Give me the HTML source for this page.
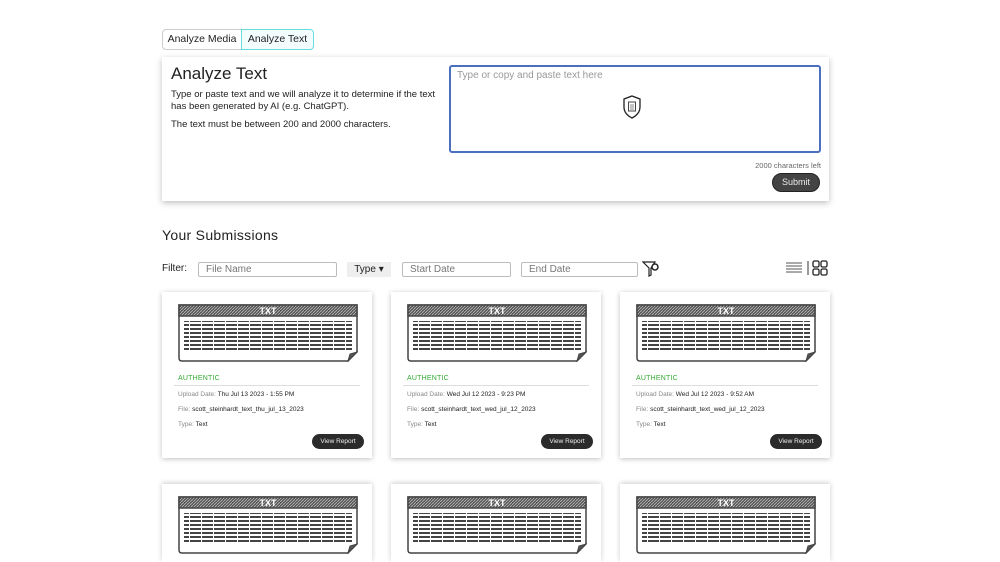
<!DOCTYPE html>
<html><head><meta charset="utf-8"><style>
*{box-sizing:border-box;margin:0;padding:0}
html,body{width:1000px;height:562px;overflow:hidden}
body{background:#fff;font-family:"Liberation Sans",sans-serif;color:#222;position:relative}
.abs{position:absolute}
.tab{position:absolute;top:29px;height:21px;border:1px solid #ccc;font-size:10.5px;line-height:19px;text-align:center;background:#fff}
.panel{position:absolute;left:162px;top:57px;width:667px;height:144px;background:#fff;box-shadow:0 2px 6px rgba(0,0,0,.25)}
.inp{position:absolute;top:262px;height:15px;border:1px solid #bbb;border-radius:2px;font-size:10px;color:#777;line-height:13px;padding-left:7px}
.card{position:absolute;width:210px;height:166px;background:#fff;box-shadow:0 1px 5px rgba(0,0,0,.25)}
.card.s{height:78px;box-shadow:0 -1px 5px rgba(0,0,0,.2)}
.card svg{position:absolute;left:16px;top:12px}
.auth{position:absolute;left:16px;top:83px;font-size:7px;color:#3a3;letter-spacing:.2px}
.hr{position:absolute;left:12px;right:12px;top:93px;border-top:1px solid #ddd}
.ln{position:absolute;left:16px;font-size:6.5px;color:#888}
.ln b{color:#222;font-weight:normal}
.btn{position:absolute;right:8px;top:142px;width:52px;height:15px;border-radius:8px;background:#2b2b2b;color:#eee;font-size:6.5px;text-align:center;line-height:15px}
</style></head><body>
<svg width="0" height="0" style="position:absolute"><defs>
<pattern id="h" width="3" height="3" patternUnits="userSpaceOnUse"><rect width="3" height="3" fill="#555"/><path d="M0 3L3 0" stroke="#bbb" stroke-width=".8"/></pattern>
<pattern id="l" width="24" height="4" patternUnits="userSpaceOnUse"><rect x="0" y="0" width="11" height="2" fill="#444"/><rect x="12" y="0" width="11" height="2" fill="#444"/></pattern>
<symbol id="doc" viewBox="0 0 180 58"><path d="M1 1H179V48L170 57H4Q1 57 1 54Z" fill="#fff" stroke="#444" stroke-width="1.5"/><rect x="1" y="1" width="178" height="11" fill="url(#h)" stroke="#444" stroke-width="1.5"/><text x="90" y="10" font-size="9" font-weight="bold" fill="#fff" text-anchor="middle" font-family="Liberation Sans">TXT</text><rect x="6" y="17" width="168" height="31" fill="url(#l)"/><path d="M179 48L170 57L172 50Z" fill="#555" stroke="#444"/></symbol>
</defs></svg>

<div class="tab" style="left:162px;width:80px;border-radius:4px 0 0 4px">Analyze Media</div>
<div class="tab" style="left:241px;width:73px;border:1px solid #6dd;background:#f3fdfd;border-radius:0 4px 4px 0">Analyze Text</div>

<div class="panel">
<div class="abs" style="left:9px;top:7px;font-size:17px">Analyze Text</div>
<div class="abs" style="left:9px;top:32px;width:270px;font-size:9.5px;line-height:12px">Type or paste text and we will analyze it to determine if the text has been generated by AI (e.g. ChatGPT).</div>
<div class="abs" style="left:9px;top:62px;font-size:9.5px">The text must be between 200 and 2000 characters.</div>
<div class="abs" style="left:287px;top:8px;width:372px;height:88px;border:2px solid #4a6fc0;border-radius:3px;font-size:10px;color:#999;padding:3px 6px">Type or copy and paste text here</div>
<svg class="abs" style="left:460px;top:38px" width="20" height="24" viewBox="0 0 20 24"><path d="M10 1L18 4V12Q18 19 10 23Q2 19 2 12V4Z" fill="none" stroke="#222" stroke-width="1.3"/><rect x="6.5" y="7" width="7" height="9" fill="none" stroke="#444"/><path d="M8 10h4M8 12h4M8 14h4" stroke="#666" stroke-width=".7"/></svg>
<div class="abs" style="right:8px;top:104px;font-size:7.5px;color:#666">2000 characters left</div>
<div class="abs" style="left:610px;top:116px;width:48px;height:19px;border-radius:10px;background:#444;border:1px solid #222;color:#eee;font-size:9px;text-align:center;line-height:17px">Submit</div>
</div>

<div class="abs" style="left:162px;top:227px;font-size:14px;letter-spacing:.3px">Your Submissions</div>
<div class="abs" style="left:162px;top:263px;font-size:10px">Filter:</div>
<div class="inp" style="left:198px;width:139px">File Name</div>
<div class="abs" style="left:347px;top:262px;width:44px;height:15px;background:#eee;font-size:10px;line-height:15px;text-align:center">Type ▾</div>
<div class="inp" style="left:402px;width:109px">Start Date</div>
<div class="inp" style="left:521px;width:117px">End Date</div>
<svg class="abs" style="left:642px;top:261px" width="18" height="16"><path d="M1 1H13L9 7V14L7 15V7Z" fill="none" stroke="#222" stroke-width="1.2"/><circle cx="13" cy="6" r="3" fill="#fff" stroke="#222" stroke-width="1.5"/></svg>
<svg class="abs" style="left:786px;top:260px" width="44" height="16"><path d="M0 3H16M0 6H16M0 9H16M0 12H16" stroke="#555"/><path d="M22 1V15" stroke="#333"/><rect x="27" y="1" width="6" height="6" rx="1.5" fill="none" stroke="#222" stroke-width="1.3"/><rect x="35" y="1" width="6" height="6" rx="1.5" fill="none" stroke="#222" stroke-width="1.3"/><rect x="27" y="9" width="6" height="6" rx="1.5" fill="none" stroke="#222" stroke-width="1.3"/><rect x="35" y="9" width="6" height="6" rx="1.5" fill="none" stroke="#222" stroke-width="1.3"/></svg>

<div class="card" style="left:162px;top:292px"><svg width="180" height="58"><use href="#doc"/></svg><div class="auth">AUTHENTIC</div><div class="hr"></div><div class="ln" style="top:99px">Upload Date: <b>Thu Jul 13 2023 - 1:55 PM</b></div><div class="ln" style="top:114px">File: <b>scott_steinhardt_text_thu_jul_13_2023</b></div><div class="ln" style="top:129px">Type: <b>Text</b></div><div class="btn">View Report</div></div>
<div class="card" style="left:391px;top:292px"><svg width="180" height="58"><use href="#doc"/></svg><div class="auth">AUTHENTIC</div><div class="hr"></div><div class="ln" style="top:99px">Upload Date: <b>Wed Jul 12 2023 - 9:23 PM</b></div><div class="ln" style="top:114px">File: <b>scott_steinhardt_text_wed_jul_12_2023</b></div><div class="ln" style="top:129px">Type: <b>Text</b></div><div class="btn">View Report</div></div>
<div class="card" style="left:620px;top:292px"><svg width="180" height="58"><use href="#doc"/></svg><div class="auth">AUTHENTIC</div><div class="hr"></div><div class="ln" style="top:99px">Upload Date: <b>Wed Jul 12 2023 - 9:52 AM</b></div><div class="ln" style="top:114px">File: <b>scott_steinhardt_text_wed_jul_12_2023</b></div><div class="ln" style="top:129px">Type: <b>Text</b></div><div class="btn">View Report</div></div>

<div class="card s" style="left:162px;top:484px"><svg width="180" height="58"><use href="#doc"/></svg></div>
<div class="card s" style="left:391px;top:484px"><svg width="180" height="58"><use href="#doc"/></svg></div>
<div class="card s" style="left:620px;top:484px"><svg width="180" height="58"><use href="#doc"/></svg></div>
</body></html>
